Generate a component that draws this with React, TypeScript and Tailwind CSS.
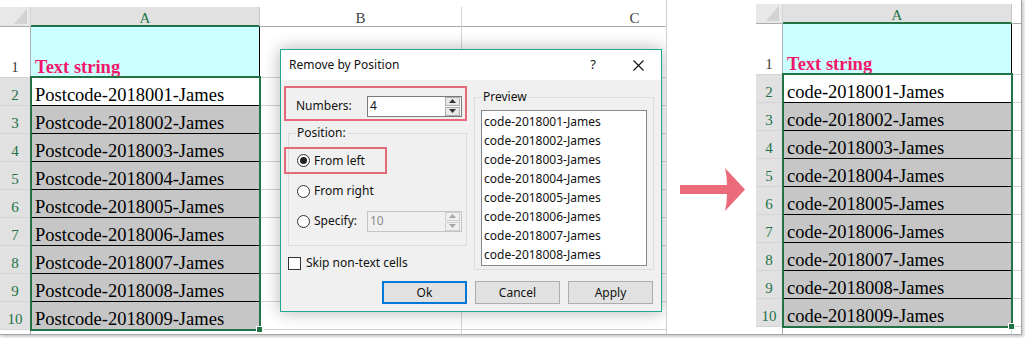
import React from 'react';

const LEFT_ROWS = [
  'Postcode-2018001-James',
  'Postcode-2018002-James',
  'Postcode-2018003-James',
  'Postcode-2018004-James',
  'Postcode-2018005-James',
  'Postcode-2018006-James',
  'Postcode-2018007-James',
  'Postcode-2018008-James',
  'Postcode-2018009-James',
];
const RIGHT_ROWS = LEFT_ROWS.map((s) => s.replace('Postcode-', 'code-'));
const PREVIEW = RIGHT_ROWS.slice(0, 8);

type Col = { label: string; w: string };

interface SheetProps {
  headW: string;
  cols: Col[];
  rows: string[];
  sel: string;
  handle: string;
  className: string;
  showEleven?: boolean;
  children?: React.ReactNode;
}

const Sheet: React.FC<SheetProps> = ({ headW, cols, rows, sel, handle, className, showEleven, children }) => {
  return (
    <div className={`relative h-full overflow-hidden font-['Liberation_Serif',serif] ${className}`}>
      {/* column headers */}
      <div className="flex h-[20px]">
        <div className={`${headW} shrink-0 bg-[#e8e8e8] border-r border-r-[#d4d4d4] border-b border-b-[#ababab] relative`}>
          <svg className="absolute right-[3px] bottom-[2px]" width="13" height="15" viewBox="0 0 13 15">
            <polygon points="13,0 13,15 0,15" fill="#d2d2d2" />
          </svg>
        </div>
        <div className="w-[229px] shrink-0 bg-[#e1e1e1] border-b-2 border-b-[#217346] border-r border-r-[#c8c8c8] flex items-center justify-center pt-[4px] leading-[17px] text-[15px] text-[#217346]">
          A
        </div>
        {cols.map((c) => (
          <div
            key={c.label + c.w}
            className={`${c.w} shrink-0 bg-white border-b border-b-[#ababab] border-r border-r-[#d4d4d4] flex items-center justify-center pt-[4px] leading-[17px] text-[15px] text-[#444]`}
          >
            {c.label}
          </div>
        ))}
      </div>

      {/* row 1 */}
      <div className="flex h-[51px]">
        <div className={`${headW} shrink-0 bg-white border-r border-r-[#ababab] border-b border-b-[#d4d4d4] flex items-end justify-center pb-[1px] leading-[17px] text-[15px] text-[#3c3c3c]`}>
          1
        </div>
        <div className="w-[229px] shrink-0 bg-[#ccffff] border-r border-b border-black flex items-end pl-[4px] leading-[20px] text-[18.5px] font-bold text-[#f2176b]">
          Text string
        </div>
        {cols.map((c) => (
          <div key={c.label + c.w} className={`${c.w} shrink-0 border-r border-b border-[#d4d4d4]`} />
        ))}
      </div>

      {/* data rows */}
      {rows.map((t, i) => (
        <div key={t} className="flex h-[28px]">
          <div className={`${headW} shrink-0 bg-[#e1e1e1] border-r border-r-[#ababab] border-b border-b-[#d4d4d4] flex items-end justify-center pb-[1px] leading-[17px] text-[15px] text-[#217346]`}>
            {i + 2}
          </div>
          <div
            className={`w-[229px] shrink-0 border-r border-b border-black flex items-end pl-[4px] leading-[20px] text-[18.5px] text-black whitespace-nowrap ${
              i === 0 ? 'bg-white' : 'bg-[#c6c6c6]'
            }`}
          >
            {t}
          </div>
          {cols.map((c) => (
            <div key={c.label + c.w} className={`${c.w} shrink-0 border-r border-b border-[#d4d4d4]`} />
          ))}
        </div>
      ))}

      {/* row 11 */}
      <div className="flex h-[28px]">
        <div className={`${headW} shrink-0 bg-white border-r border-r-[#ababab] flex items-start justify-center pt-[5px] leading-[17px] text-[15px] text-[#3c3c3c]`}>
          {showEleven ? '11' : ''}
        </div>
        <div className="w-[229px] shrink-0 border-r border-[#d4d4d4]" />
        {cols.map((c) => (
          <div key={c.label + c.w} className={`${c.w} shrink-0 border-r border-[#d4d4d4]`} />
        ))}
      </div>

      {/* selection */}
      <div className={`absolute w-[231px] h-[255px] border-2 border-[#217346] ${sel}`} />
      <div className={`absolute w-[7px] h-[7px] bg-[#217346] border border-white ${handle}`} />

      {children}
    </div>
  );
};

const Spin: React.FC<{ disabled?: boolean }> = ({ disabled }) => {
  const fill = disabled ? '#a6a6a6' : '#333333';
  const box = disabled
    ? 'border-[#cfcfcf] bg-[#efefef]'
    : 'border-[#adadad] bg-[#e8e8e8]';
  return (
    <div className="flex flex-col w-[15px] h-[19px] mr-[1px] gap-[1px]">
      <div className={`flex-1 border ${box} flex items-center justify-center`}>
        <svg width="7" height="4" viewBox="0 0 7 4">
          <path d="M0 4 L3.5 0 L7 4 Z" fill={fill} />
        </svg>
      </div>
      <div className={`flex-1 border ${box} flex items-center justify-center`}>
        <svg width="7" height="4" viewBox="0 0 7 4">
          <path d="M0 0 L3.5 4 L7 0 Z" fill={fill} />
        </svg>
      </div>
    </div>
  );
};

const Radio: React.FC<{ checked?: boolean }> = ({ checked }) => (
  <span className="w-[13px] h-[13px] shrink-0 rounded-full border border-[#333] bg-white flex items-center justify-center">
    {checked && <span className="w-[7px] h-[7px] rounded-full bg-[#222]" />}
  </span>
);

const RemoveDialog: React.FC = () => {
  return (
    <div className="absolute left-[280px] top-[49px] w-[382px] h-[263px] bg-[#f0f0f0] border border-[#1fa98e] shadow-[0_0_16px_rgba(0,0,0,0.3)] font-['Noto_Sans',sans-serif] text-[12px] text-[#111] flex flex-col">
      {/* title bar */}
      <div className="h-[30px] bg-white flex items-center pl-[8px] shrink-0">
        <span>Remove by Position</span>
        <span className="ml-auto w-[20px] text-center text-[13px]">?</span>
        <span className="ml-[12px] w-[46px] flex items-center justify-center">
          <svg width="11" height="11" viewBox="0 0 11 11">
            <path d="M0.5 0.5 L10.5 10.5 M10.5 0.5 L0.5 10.5" stroke="#111" strokeWidth="1.1" />
          </svg>
        </span>
      </div>

      {/* body */}
      <div className="flex pl-[3px] pt-[6px] gap-[7px]">
        <div className="w-[183px] shrink-0">
          <div className="h-[35px] border-2 border-[#e46a7a] flex items-center pt-[5px] pl-[10px] pr-[3px]">
            <span className="flex-1">Numbers:</span>
            <div className="w-[95px] h-[21px] border border-[#7a7a7a] bg-white flex items-center justify-between pl-[2px]">
              <span>4</span>
              <Spin />
            </div>
          </div>

          <fieldset className="ml-[4px] mt-[4px] w-[179px] border border-[#dcdcdc] pb-[9px]">
            <legend className="ml-[7px] px-[1px] leading-[16px]">Position:</legend>
            <div className="-ml-[5px] mt-[6px] w-[103px] h-[27px] border-2 border-[#e46a7a] flex items-center pl-[11px] gap-[4px]">
              <Radio checked />
              <span>From left</span>
            </div>
            <div className="mt-[2px] h-[30px] flex items-center pl-[8px] gap-[4px]">
              <Radio />
              <span>From right</span>
            </div>
            <div className="h-[30px] flex items-center pl-[8px] pr-[4px] gap-[4px]">
              <Radio />
              <span>Specify:</span>
              <div className="ml-auto w-[95px] h-[21px] border border-[#c4c4c4] bg-[#f0f0f0] flex items-center justify-between pl-[2px] text-[#8a8a8a]">
                <span>10</span>
                <Spin disabled />
              </div>
            </div>
          </fieldset>

          <div className="ml-[4px] mt-[7px] h-[20px] flex items-center gap-[5px]">
            <span className="w-[13px] h-[13px] border border-[#333] bg-white" />
            <span>Skip non-text cells</span>
          </div>
        </div>

        <div className="w-[180px] shrink-0 mt-[3px]">
          <fieldset className="border border-[#dcdcdc] pb-[3px]">
            <legend className="ml-[7px] px-[1px] leading-[16px]">Preview</legend>
            <div className="mx-[6px] mt-[5px] h-[156px] border border-[#828790] bg-white pt-[1px] pl-[2px]">
              {PREVIEW.map((p) => (
                <div key={p} className="leading-[19px] whitespace-nowrap">
                  {p}
                </div>
              ))}
            </div>
          </fieldset>
        </div>
      </div>

      {/* buttons */}
      <div className="flex justify-end gap-[8px] pr-[8px] mt-[8px]">
        <button className="w-[85px] h-[23px] border-2 border-[#0078d7] bg-[#e1e1e1]">Ok</button>
        <button className="w-[85px] h-[23px] border border-[#adadad] bg-[#e1e1e1]">Cancel</button>
        <button className="w-[85px] h-[23px] border border-[#adadad] bg-[#e1e1e1]">Apply</button>
      </div>
    </div>
  );
};

export default function App() {
  return (
    <div className="w-[1025px] h-[338px] bg-[#f7f7f7] overflow-hidden">
      <div className="w-[1022px] h-[335px] bg-white flex border-r border-b border-[#a6a6a6] shadow-[1px_1px_3px_rgba(0,0,0,0.25)] overflow-hidden">
        <Sheet
          className="w-[667px] shrink-0 pt-[7px] border-r border-[#d0d0d0]"
          headW="w-[31px]"
          cols={[
            { label: 'B', w: 'w-[202px]' },
            { label: 'C', w: 'w-[346px]' },
          ]}
          rows={LEFT_ROWS}
          sel="left-[30px] top-[76px]"
          handle="left-[256px] top-[326px]"
        >
          <RemoveDialog />
        </Sheet>

        {/* arrow */}
        <div className="w-[89px] shrink-0">
          <svg className="ml-[13px] mt-[167px]" width="66" height="46" viewBox="0 0 66 46">
            <path
              d="M0 18 L47 18 Q47 9 45 1 L65 22.5 L45 44 Q47 36 47 27 L0 27 Z"
              fill="#ec6b7b"
            />
          </svg>
        </div>

        <Sheet
          className="flex-1 pt-[4px]"
          headW="w-[27px]"
          cols={[{ label: '', w: 'w-[60px]' }]}
          rows={RIGHT_ROWS}
          sel="left-[26px] top-[73px]"
          handle="left-[252px] top-[323px]"
          showEleven
        />
      </div>
    </div>
  );
}
